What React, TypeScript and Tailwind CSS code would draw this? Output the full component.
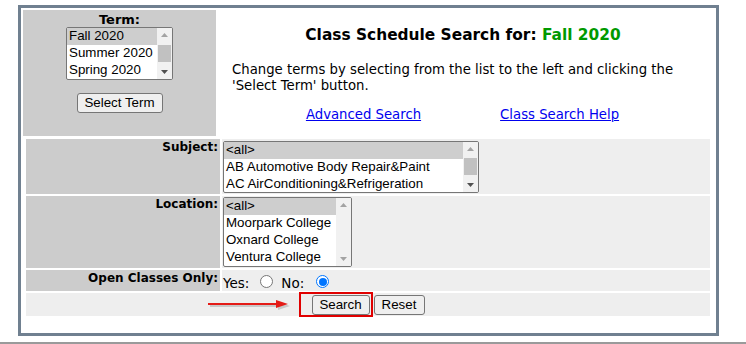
import React from 'react';

const arial = "font-['Liberation_Sans',Arial,sans-serif]";
const verdana = "font-['DejaVu_Sans',Verdana,sans-serif]";

type Thumb = { top: number; height: number } | null;

function Arrow({ up, dark }: { up: boolean; dark: boolean }): JSX.Element {
	return (
		<div className="h-[14px] flex items-center justify-center">
			<svg width="7" height="4" viewBox="0 0 7 4">
				<polygon
					points={up ? '0,4 7,4 3.5,0' : '0,0 7,0 3.5,4'}
					fill={dark ? '#505050' : '#a3a3a3'}
				/>
			</svg>
		</div>
	);
}

function ListBox({
	width,
	height,
	items,
	thumb,
	downDark,
}: {
	width: number;
	height: number;
	items: string[];
	thumb: Thumb;
	downDark: boolean;
}): JSX.Element {
	return (
		<div
			className="flex border border-[#767676] rounded-[2px] bg-white overflow-hidden"
			style={{ width, height }}
		>
			<div className="flex-1 overflow-hidden">
				{items.map((item, i) => (
					<div
						key={item}
						className={`h-[17px] leading-[15px] px-[2px] whitespace-nowrap text-[13.33px] text-black ${arial} ${i === 0 ? 'bg-[#cecece]' : ''}`}
					>
						{item}
					</div>
				))}
			</div>
			<div className="w-[15px] bg-[#f1f1f1] flex flex-col justify-between relative">
				<Arrow up={true} dark={false} />
				{thumb && (
					<div
						className="absolute left-[1px] right-[1px] bg-[#c1c1c1]"
						style={{ top: thumb.top, height: thumb.height }}
					/>
				)}
				<Arrow up={false} dark={downDark} />
			</div>
		</div>
	);
}

function Radio({ checked }: { checked: boolean }): JSX.Element {
	if (checked) {
		return (
			<div className="w-[13px] h-[13px] rounded-full border border-[#0075ff] bg-white flex items-center justify-center">
				<div className="w-[8px] h-[8px] rounded-full bg-[#0075ff]" />
			</div>
		);
	}
	return <div className="w-[13px] h-[13px] rounded-full border border-[#767676] bg-white" />;
}

const btn = `h-[20px] bg-[#efefef] border border-[#767676] rounded-[3px] text-[13.33px] leading-none text-black ${arial}`;

function App(): JSX.Element {
	return (
		<div className="w-[746px] h-[344px] bg-white overflow-hidden text-black">
			<div className="ml-[18px] mt-[5px] w-[701px] h-[331px] border-[3px] border-[#708090] p-[2px]">
				{/* term row */}
				<div className="flex gap-[2px] h-[126px]">
					<div className="w-[193px] bg-[#cccccc] flex flex-col items-center pt-[3px]">
						<div className={`text-[13px] leading-[14px] font-bold ${verdana}`}>Term:</div>
						<ListBox
							width={107}
							height={53}
							items={['Fall 2020', 'Summer 2020', 'Spring 2020']}
							thumb={{ top: 17, height: 17 }}
							downDark={true}
						/>
						<button className={`${btn} w-[86px] mt-[13px]`}>Select Term</button>
					</div>
					<div className={`flex-1 pt-[16px] ${verdana}`}>
						<div className="text-center text-[15.4px] leading-[19px] font-bold pr-[6px]">
							Class Schedule Search for: <span className="text-[#009900]">Fall 2020</span>
						</div>
						<p className="mt-[17px] pl-[14px] text-[13.25px] leading-[16px] whitespace-nowrap">
							Change terms by selecting from the list to the left and clicking the
							<br />
							'Select Term' button.
						</p>
						<div className="mt-[13px] flex justify-center gap-[79px] pr-[7px] text-[13.25px] leading-[16px]">
							<a href="#" className="text-[#0000ee] underline">Advanced Search</a>
							<a href="#" className="text-[#0000ee] underline">Class Search Help</a>
						</div>
					</div>
				</div>

				{/* search fields */}
				<div className="ml-[3px] mt-[3px] w-[684px] flex flex-col gap-[2px]">
					<div className="flex gap-[2px] h-[55px]">
						<div className={`w-[194px] bg-[#cccccc] text-right pr-[2px] pt-[1px] text-[12px] leading-[15px] font-bold ${verdana}`}>
							Subject:
						</div>
						<div className="flex-1 bg-[#eeeeee] pt-[2px] pl-[1px]">
							<ListBox
								width={256}
								height={52}
								items={['<all>', 'AB Automotive Body Repair&Paint', 'AC AirConditioning&Refrigeration']}
								thumb={{ top: 16, height: 17 }}
								downDark={true}
							/>
						</div>
					</div>
					<div className="flex gap-[2px] h-[72px]">
						<div className={`w-[194px] bg-[#cccccc] text-right pr-[2px] pt-[1px] text-[12px] leading-[15px] font-bold ${verdana}`}>
							Location:
						</div>
						<div className="flex-1 bg-[#eeeeee] pt-[1px] pl-[1px]">
							<ListBox
								width={129}
								height={70}
								items={['<all>', 'Moorpark College', 'Oxnard College', 'Ventura College']}
								thumb={null}
								downDark={false}
							/>
						</div>
					</div>
					<div className="flex gap-[2px] h-[21px]">
						<div className={`w-[194px] bg-[#cccccc] text-right pr-[2px] pt-[1px] text-[12px] leading-[15px] font-bold ${verdana}`}>
							Open Classes Only:
						</div>
						<div className={`flex-1 bg-[#eeeeee] flex items-start pt-[5px] pl-[1px] text-[13.5px] leading-[16px] ${verdana}`}>
							<span>Yes:</span>
							<div className="ml-[11px] mr-[8px]">
								<Radio checked={false} />
							</div>
							<span>No:</span>
							<div className="ml-[12px]">
								<Radio checked={true} />
							</div>
						</div>
					</div>
					<div className="h-[23px] bg-[#eeeeee] flex justify-center pt-[2px]">
						<div className="relative flex gap-[4px] h-[20px]">
							<svg
								className="absolute left-[-104px] top-[4px]"
								width="82"
								height="11"
								viewBox="0 0 82 11"
							>
								<line x1="2" y1="7" x2="72" y2="7" stroke="#c8c8c8" strokeWidth="2" />
								<polygon points="70,3 82,7 70,11" fill="#c8c8c8" />
								<line x1="0" y1="5" x2="70" y2="5" stroke="#e41b17" strokeWidth="2" />
								<polygon points="68,1 80,5 68,9" fill="#e41b17" />
							</svg>
							<div className="absolute left-[-13px] top-[-3px] w-[74px] h-[25px] border-2 border-[#e00000]" />
							<button className={`${btn} w-[58px]`}>Search</button>
							<button className={`${btn} w-[51px]`}>Reset</button>
						</div>
					</div>
				</div>
			</div>
			<div className="mt-[6px] h-[2px] bg-[#9a9a9a]" />
		</div>
	);
}

export default App;
